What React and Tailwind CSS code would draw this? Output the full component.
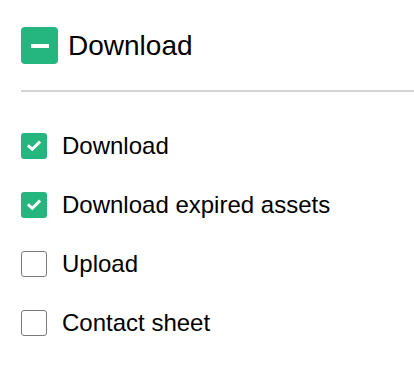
import React from "react";

function Check() {
  return (
    <svg width="14" height="12" viewBox="0 0 14 12" className="block">
      <path d="M2 6.3 L5.3 9.3 L12 2.6" fill="none" stroke="white" strokeWidth="3" strokeLinecap="square" strokeLinejoin="miter" />
    </svg>
  );
}

function Row({ checked, label }) {
  return (
    <div className="flex items-center h-[26px]">
      {checked ? (
        <div className="w-[26px] h-[26px] rounded-[3px] bg-[#25b57e] flex items-center justify-center">
          <Check />
        </div>
      ) : (
        <div className="w-[26px] h-[26px] rounded-[3px] border-[1.5px] border-[#7a7a7a] bg-white" />
      )}
      <span className="ml-[15px] text-[24px] leading-none text-black">{label}</span>
    </div>
  );
}

export default function App() {
  return (
    <div className="w-[414px] h-[370px] bg-white overflow-hidden" style={{ fontFamily: '"Liberation Sans", Arial, sans-serif' }}>
      <div className="pl-[21px] pt-[27px]">
        <div className="flex items-center">
          <div className="w-[37px] h-[37px] rounded-[4px] bg-[#25b57e] flex items-center justify-center">
            <div className="w-[18px] h-[4px] bg-white" />
          </div>
          <span className="ml-[10px] text-[28px] leading-none text-black">Download</span>
        </div>
        <div className="mt-[26px] h-[2px] bg-[#d4d4d4]" />
        <div className="mt-[41px] flex flex-col gap-[33px]">
          <Row checked label="Download" />
          <Row checked label="Download expired assets" />
          <Row label="Upload" />
          <Row label="Contact sheet" />
        </div>
      </div>
    </div>
  );
}
